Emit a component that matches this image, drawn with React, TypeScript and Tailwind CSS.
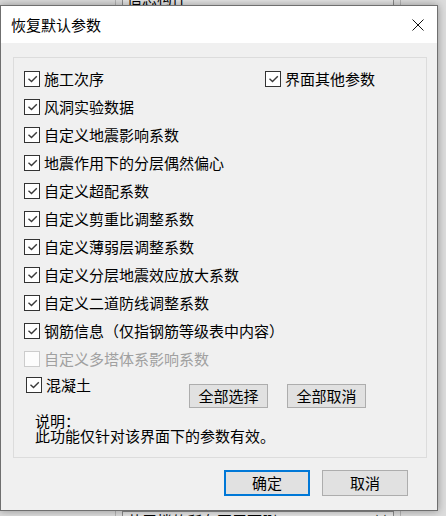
import React from "react";

const FONT = "font-['SimSun','Noto_Sans_CJK_SC','Liberation_Sans',sans-serif]";

function Check({ checked = true, disabled = false }: { checked?: boolean; disabled?: boolean }) {
  return (
    <span
      className={
        "flex h-[16px] w-[16px] shrink-0 items-center justify-center border " +
        (disabled ? "border-[#cccccc] bg-[#fcfcfc]" : "border-[#333333] bg-white")
      }
    >
      {checked && (
        <svg width="14" height="14" viewBox="0 0 14 14">
          <path d="M3.5 6.8 L6.5 9.6 L11.8 4.2" fill="none" stroke="#3a3a3a" strokeWidth="1.4" />
        </svg>
      )}
    </span>
  );
}

function Item({ label, disabled = false, checked = true }: { label: string; disabled?: boolean; checked?: boolean }) {
  return (
    <div className="flex items-center gap-[4px]">
      <Check checked={checked} disabled={disabled} />
      <span className={"whitespace-nowrap text-[15px] leading-[16px] " + (disabled ? "text-[#a0a0a0]" : "text-black")}>
        {label}
      </span>
    </div>
  );
}

const rows = [
  "风洞实验数据",
  "自定义地震影响系数",
  "地震作用下的分层偶然偏心",
  "自定义超配系数",
  "自定义剪重比调整系数",
  "自定义薄弱层调整系数",
  "自定义分层地震效应放大系数",
  "自定义二道防线调整系数",
  "钢筋信息（仅指钢筋等级表中内容）",
];

export default function App() {
  return (
    <div className={"relative flex h-[516px] w-[446px] flex-col justify-between overflow-hidden bg-[#dcdcdc] " + FONT}>
      {/* background window, top */}
      <div className="flex h-[5px] overflow-hidden">
        <div className="ml-[115px] flex h-full w-[286px] border-x border-[#b4b4b4] px-[6px]">
          <div className="h-full flex-1 overflow-hidden border-x border-[#8a8a8a] bg-[#e4e4e4] pl-[4px]">
            <div className="-mt-[10px] text-[15px] leading-[15px] text-black">信息构件</div>
          </div>
        </div>
      </div>
      {/* background window, bottom */}
      <div className="flex h-[5px] overflow-hidden">
        <div className="ml-[115px] flex h-full w-[286px] border-x border-[#b4b4b4] px-[6px]">
          <div className="flex h-full flex-1 justify-between overflow-hidden border-x border-t border-[#8a8a8a] bg-[#e4e4e4] pl-[4px] pr-[6px]">
            <div className="mt-[1px] text-[15px] leading-[15px] text-black">若层楼的所有图层可删</div>
            <div className="mt-[1px] text-[12px] leading-[12px] text-black">∨</div>
          </div>
        </div>
      </div>

      {/* dialog */}
      <div className="absolute left-0 top-[5px] flex h-[506px] w-[438px] flex-col border border-[#6f6f6f] bg-[#f0f0f0] shadow-[0_0_8px_rgba(0,0,0,0.35)]">
        <div className="flex h-[37px] shrink-0 items-center justify-between bg-white pl-[10px] pr-[13px]">
          <span className="pt-[1px] text-[15px] leading-[16px] text-black">恢复默认参数</span>
          <svg width="12" height="12" viewBox="0 0 12 12" className="mt-[1px]">
            <path d="M0.5 0.5 L11.5 11.5 M11.5 0.5 L0.5 11.5" stroke="#111" strokeWidth="1" fill="none" />
          </svg>
        </div>

        <div className="flex flex-1 flex-col pl-[12px] pt-[14px]">
          <div className="flex h-[401px] w-[414px] flex-col border border-[#dcdcdc] pl-[10px] pt-[7px]">
            <div className="flex h-[28px] items-center">
              <div className="w-[241px]">
                <Item label="施工次序" />
              </div>
              <Item label="界面其他参数" />
            </div>
            {rows.map((r) => (
              <div key={r} className="flex h-[28px] items-center">
                <Item label={r} />
              </div>
            ))}
            <div className="flex h-[28px] items-center">
              <Item label="自定义多塔体系影响系数" disabled checked={false} />
            </div>
            <div className="flex items-start">
              <div className="mt-[4px] w-[165px] pl-[2px]">
                <Item label="混凝土" />
              </div>
              <div className="mt-[11px] flex gap-[19px]">
                <button className="flex h-[24px] w-[79px] items-center justify-center border border-[#adadad] bg-[#e1e1e1] text-[15px] leading-[16px] text-black">
                  全部选择
                </button>
                <button className="flex h-[24px] w-[79px] items-center justify-center border border-[#adadad] bg-[#e1e1e1] text-[15px] leading-[16px] text-black">
                  全部取消
                </button>
              </div>
            </div>
            <div className="ml-[11px] mt-[5px] flex flex-col text-[15px] leading-[15px] text-black">
              <span className="h-[15px]">说明：</span>
              <span className="h-[15px]">此功能仅针对该界面下的参数有效。</span>
            </div>
          </div>

          <div className="mt-[12px] flex justify-end gap-[12px] pr-[29px]">
            <button className="flex h-[26px] w-[86px] items-center justify-center border-2 border-[#0078d7] bg-[#e1e1e1] text-[15px] leading-[16px] text-black">
              确定
            </button>
            <button className="flex h-[26px] w-[86px] items-center justify-center border border-[#adadad] bg-[#e1e1e1] text-[15px] leading-[16px] text-black">
              取消
            </button>
          </div>
        </div>
      </div>
    </div>
  );
}
